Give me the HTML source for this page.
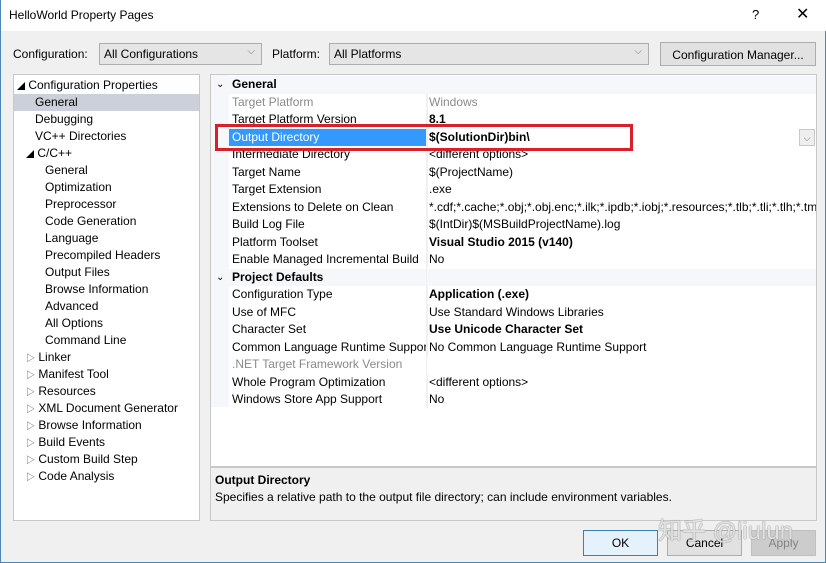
<!DOCTYPE html>
<html><head><meta charset="utf-8"><style>
*{box-sizing:border-box;margin:0;padding:0}
body{width:826px;height:563px;background:#f0f0f0;font-family:"Liberation Sans","Noto Sans CJK SC",sans-serif;font-size:12px;color:#000;position:relative;overflow:hidden;border-left:1px solid #4a87b8;border-right:1px solid #4a87b8;border-bottom:1px solid #4a87b8}
.abs{position:absolute}
.title{left:0;top:0;width:826px;height:31px;background:#fff}
.combo{height:22px;border:1px solid #adadad;background:#e5e5e5;padding:3px 4px;white-space:nowrap}
.combo .ar{position:absolute;right:6px;top:2px;color:#777;font-size:10px}
.btn{border:1px solid #adadad;background:#e1e1e1;text-align:center;padding-top:5px}
.tree{left:12px;top:74px;width:187px;height:447px;background:#fff;border:1px solid #c8c8c8}
.tree div{position:absolute;height:17px;line-height:17px;white-space:nowrap}
.grid{left:209px;top:74px;width:607px;height:393px;background:#fff;border:1px solid #c8c8c8;overflow:hidden}
.r{position:absolute;left:0;width:605px;height:17.5px;line-height:17px;white-space:nowrap}
.r .n{position:absolute;left:21px;width:194px;overflow:hidden;height:17px;padding-left:0}
.r .v{position:absolute;left:216px;border-left:1px solid #f0f0f0;padding-left:1px}
.gut{position:absolute;left:0;top:0;width:18px;height:332px;background:#f5f7fa}
.hdr{font-weight:bold}
.desc{left:209px;top:467px;width:607px;height:54px;border:1px solid #c8c8c8;background:#f0f0f0;padding:4px 4px}
</style></head><body>
<div class="abs title"></div>
<div class="abs" style="left:8px;top:8px;font-size:12px">HelloWorld Property Pages</div>
<div class="abs" style="left:751px;top:7px;font-size:13px">?</div>
<div class="abs" style="left:795px;top:4px;font-size:16px">✕</div>

<div class="abs" style="left:12px;top:47px">Configuration:</div>
<div class="abs combo" style="left:98px;top:43px;width:163px">All Configurations<span class="ar">⌵</span></div>
<div class="abs" style="left:271px;top:47px">Platform:</div>
<div class="abs combo" style="left:328px;top:43px;width:320px">All Platforms<span class="ar">⌵</span></div>
<div class="abs btn" style="left:659px;top:42px;width:156px;height:24px">Configuration Manager...</div>

<div class="abs tree">
<div style="left:0;top:2px;width:185px;padding-left:3px"><span style="font-size:8px">◢</span> Configuration Properties</div>
<div style="left:0;top:19px;width:185px;background:#ccd0da;padding-left:21px">General</div>
<div style="left:21px;top:36px">Debugging</div>
<div style="left:21px;top:53px">VC++ Directories</div>
<div style="left:12px;top:70px"><span style="font-size:8px">◢</span> C/C++</div>
<div style="left:31px;top:87px">General</div>
<div style="left:31px;top:104px">Optimization</div>
<div style="left:31px;top:121px">Preprocessor</div>
<div style="left:31px;top:138px">Code Generation</div>
<div style="left:31px;top:155px">Language</div>
<div style="left:31px;top:172px">Precompiled Headers</div>
<div style="left:31px;top:189px">Output Files</div>
<div style="left:31px;top:206px">Browse Information</div>
<div style="left:31px;top:223px">Advanced</div>
<div style="left:31px;top:240px">All Options</div>
<div style="left:31px;top:257px">Command Line</div>
<div style="left:12px;top:274px"><span style="font-size:9px;color:#555">▷</span> Linker</div>
<div style="left:12px;top:291px"><span style="font-size:9px;color:#555">▷</span> Manifest Tool</div>
<div style="left:12px;top:308px"><span style="font-size:9px;color:#555">▷</span> Resources</div>
<div style="left:12px;top:325px"><span style="font-size:9px;color:#555">▷</span> XML Document Generator</div>
<div style="left:12px;top:342px"><span style="font-size:9px;color:#555">▷</span> Browse Information</div>
<div style="left:12px;top:359px"><span style="font-size:9px;color:#555">▷</span> Build Events</div>
<div style="left:12px;top:376px"><span style="font-size:9px;color:#555">▷</span> Custom Build Step</div>
<div style="left:12px;top:393px"><span style="font-size:9px;color:#555">▷</span> Code Analysis</div>
</div>

<div class="abs grid">
<div class="gut"></div>
<div class="r hdr" style="top:1px;background:#f5f7fa"><span style="position:absolute;left:5px;font-weight:normal;font-size:10px">⌄</span><span class="n">General</span></div>
<div class="r" style="top:18.5px;color:#8a8a8a"><span class="n">Target Platform</span><span class="v">Windows</span></div>
<div class="r" style="top:36px"><span class="n">Target Platform Version</span><span class="v hdr">8.1</span></div>
<div class="r" style="top:53.5px"><span class="n" style="background:#3399ff;color:#fff;left:18px;padding-left:3px;width:198px">Output Directory</span><span class="v hdr">$(SolutionDir)bin\</span><span style="position:absolute;left:588px;top:0;width:16px;height:17px;border:1px solid #c8c8c8;background:#eee;font-size:9px;text-align:center;color:#666">⌵</span></div>
<div class="r" style="top:71px"><span class="n">Intermediate Directory</span><span class="v">&lt;different options&gt;</span></div>
<div class="r" style="top:88.5px"><span class="n">Target Name</span><span class="v">$(ProjectName)</span></div>
<div class="r" style="top:106px"><span class="n">Target Extension</span><span class="v">.exe</span></div>
<div class="r" style="top:123.5px"><span class="n">Extensions to Delete on Clean</span><span class="v">*.cdf;*.cache;*.obj;*.obj.enc;*.ilk;*.ipdb;*.iobj;*.resources;*.tlb;*.tli;*.tlh;*.tmp;</span></div>
<div class="r" style="top:141px"><span class="n">Build Log File</span><span class="v">$(IntDir)$(MSBuildProjectName).log</span></div>
<div class="r" style="top:158.5px"><span class="n">Platform Toolset</span><span class="v hdr">Visual Studio 2015 (v140)</span></div>
<div class="r" style="top:176px"><span class="n">Enable Managed Incremental Build</span><span class="v">No</span></div>
<div class="r hdr" style="top:193.5px;background:#f5f7fa"><span style="position:absolute;left:5px;font-weight:normal;font-size:10px">⌄</span><span class="n">Project Defaults</span></div>
<div class="r" style="top:211px"><span class="n">Configuration Type</span><span class="v hdr">Application (.exe)</span></div>
<div class="r" style="top:228.5px"><span class="n">Use of MFC</span><span class="v">Use Standard Windows Libraries</span></div>
<div class="r" style="top:246px"><span class="n">Character Set</span><span class="v hdr">Use Unicode Character Set</span></div>
<div class="r" style="top:263.5px"><span class="n">Common Language Runtime Support</span><span class="v">No Common Language Runtime Support</span></div>
<div class="r" style="top:281px;color:#8a8a8a"><span class="n">.NET Target Framework Version</span><span class="v"></span></div>
<div class="r" style="top:298.5px"><span class="n">Whole Program Optimization</span><span class="v">&lt;different options&gt;</span></div>
<div class="r" style="top:316px"><span class="n">Windows Store App Support</span><span class="v">No</span></div>
<div style="position:absolute;left:215px;top:18px;width:1px;height:316px;background:#f0f0f0"></div>
</div>
<div class="abs" style="left:214px;top:124px;width:418px;height:27px;border:3px solid #d9202a"></div>

<div class="abs desc"><div style="font-weight:bold;margin-top:1px">Output Directory</div><div style="margin-top:3px">Specifies a relative path to the output file directory; can include environment variables.</div></div>

<div class="abs btn" style="left:582px;top:530px;width:75px;height:26px;border-color:#3c7fb1;background:#e5f1fb">OK</div>
<div class="abs btn" style="left:666px;top:530px;width:75px;height:26px">Cancel</div>
<div class="abs btn" style="left:750px;top:530px;width:65px;height:26px;background:#ccc;border-color:#bfbfbf;color:#838383">Apply</div>
<div class="abs" style="left:657px;top:511px;font-size:24px;color:rgba(255,255,255,0.75);text-shadow:0 0 1px #888,0 0 1px #888">知乎 @liulun</div>
</body></html>
